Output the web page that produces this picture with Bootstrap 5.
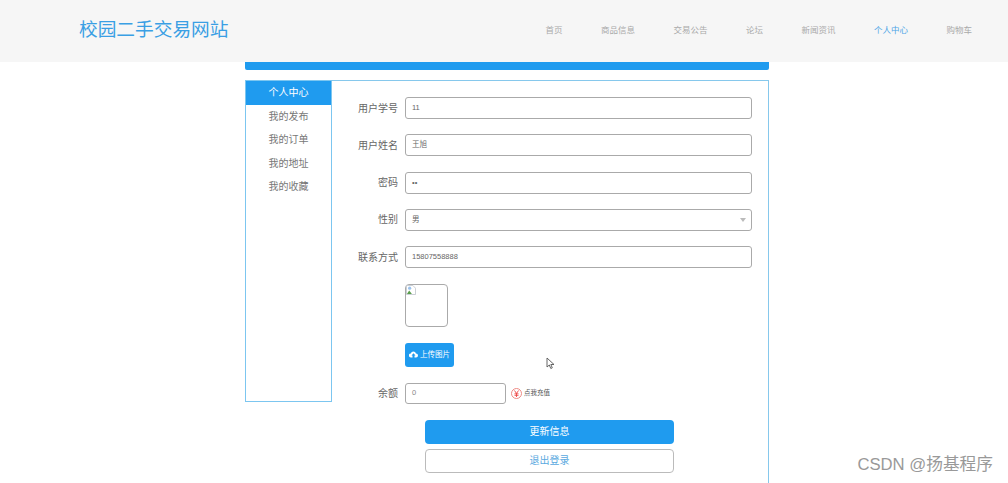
<!DOCTYPE html>
<html lang="zh">
<head>
<meta charset="utf-8">
<title>校园二手交易网站</title>
<link href="https://cdn.jsdelivr.net/npm/bootstrap@5.3.0/dist/css/bootstrap.min.css" rel="stylesheet">
<style>
html,body{height:483px;overflow:hidden;background:#fff}
body{font-family:"Liberation Sans","Noto Sans CJK SC",sans-serif;position:relative;color:#666}
.site-head{height:62px;background:#f6f6f6;padding-left:79px;padding-right:36px}
.site-logo{font-size:18.700px;color:#3a9fe4;line-height:1;margin-top:-1px}
.site-menu{font-size:8.500px;color:#aaa;margin-top:-2px}
.site-menu a{color:#aaa;text-decoration:none;margin-left:38.500px}
.site-menu a.on{color:#4da5e6}
.blue-strip{width:524px;height:7.500px;background:#1f9bef;margin:0 0 0 245px;border-radius:0 0 2px 2px}
.shell{width:524px;margin:10.500px 0 0 245px;height:600px}
.side-col{width:87px;height:322px;border:1px solid #7cc6f0;flex:none;font-size:10px;color:#777}
.side-col div{height:23.500px;line-height:24px;text-align:center}
.side-col div.on{background:#1f9bef;color:#fff}
.main-col{flex:1;border:1px solid #86c8ec;border-left:0;padding:16px 16px 0 0}
.f-row{height:22px;margin-bottom:15.300px}
.f-label{width:66px;text-align:right;font-size:10px;color:#666;margin-right:7px;flex:none}
.f-box{flex:1;height:22px;border:1px solid #aaa;border-radius:3px;font-size:7.500px;color:#666;padding-left:6px;line-height:20px;background:#fff;display:flex;align-items:center;justify-content:space-between}
.f-caret{width:0;height:0;border-left:3.500px solid transparent;border-right:3.500px solid transparent;border-top:4px solid #bbb;margin-right:5px}
.pic-box{width:43px;height:43px;border:1px solid #aaa;border-radius:4px;margin:15.500px 0 16px 73px}
.pic-box svg{display:block}
.up-btn{width:49px;height:24px;background:#1f9bef;color:#fff;border-radius:3px;font-size:7.500px;margin-left:73px;gap:2px}
.money{margin-top:16px;margin-bottom:16px;height:21px}
.money .f-box{flex:none;width:101px;height:21px;color:#888}
.pay-text{font-size:6.500px;color:#555;margin-left:5px;gap:2px}
.act-btn{width:249px;height:24px;margin-left:93px;border-radius:4px;font-size:10px}
.act-main{background:#1f9bef;color:#fff}
.act-out{border:1px solid #bbb;color:#5aa9e0;background:#fff;margin-top:5px}
.mark-text{position:absolute;right:15px;top:455px;font-size:16.700px;color:#999;line-height:1.2}
.mouse{position:absolute;left:546px;top:357px}
</style>
</head>
<body>
<header class="site-head d-flex align-items-center justify-content-between">
  <div class="site-logo">校园二手交易网站</div>
  <nav class="site-menu d-flex align-items-center">
    <a href="#">首页</a><a href="#">商品信息</a><a href="#">交易公告</a><a href="#">论坛</a><a href="#">新闻资讯</a><a href="#" class="on">个人中心</a><a href="#">购物车</a>
  </nav>
</header>
<div class="blue-strip"></div>
<div class="shell d-flex">
  <div class="side-col">
    <div class="on">个人中心</div>
    <div>我的发布</div>
    <div>我的订单</div>
    <div>我的地址</div>
    <div>我的收藏</div>
  </div>
  <div class="main-col">
    <div class="f-row d-flex align-items-center"><div class="f-label">用户学号</div><div class="f-box">11</div></div>
    <div class="f-row d-flex align-items-center"><div class="f-label">用户姓名</div><div class="f-box">王旭</div></div>
    <div class="f-row d-flex align-items-center"><div class="f-label">密码</div><div class="f-box">••</div></div>
    <div class="f-row d-flex align-items-center"><div class="f-label">性别</div><div class="f-box">男<span class="f-caret"></span></div></div>
    <div class="f-row d-flex align-items-center"><div class="f-label">联系方式</div><div class="f-box">15807558888</div></div>
    <div class="pic-box">
      <svg width="10" height="10" viewBox="0 0 11 11"><path d="M.5.500h7l3 3v7H.5z" fill="#fff" stroke="#c5c9d0"/><path d="M1 10l2.500-4 3 4z" fill="#5a9e4c"/><circle cx="4" cy="3.500" r="1.800" fill="#9cc3ee"/></svg>
    </div>
    <div class="up-btn d-flex align-items-center justify-content-center">
      <svg width="9" height="7" viewBox="0 0 18 14"><path d="M4 13a4 4 0 0 1-.5-8A5.500 5.500 0 0 1 14 5a4 4 0 0 1 0 8h-3V9h2L9 4.500 5 9h2v4z" fill="#fff"/></svg>
      <span>上传图片</span>
    </div>
    <div class="money d-flex align-items-center">
      <div class="f-label">余额</div><div class="f-box">0</div>
      <div class="pay-text d-flex align-items-center">
        <svg width="11" height="11" viewBox="0 0 11 11"><circle cx="5.500" cy="5.500" r="5" fill="#fff" stroke="#ee8a84"/><path d="M3.500 2.500l2 3 2-3M5.500 5.500v3.500M3.500 5.800h4M3.500 7.300h4" fill="none" stroke="#e44" stroke-width=".9"/></svg>
        <span>点我充值</span>
      </div>
    </div>
    <div class="act-btn act-main d-flex align-items-center justify-content-center">更新信息</div>
    <div class="act-btn act-out d-flex align-items-center justify-content-center">退出登录</div>
  </div>
</div>
<svg class="mouse" width="9" height="13" viewBox="0 0 9 13"><path d="M1 1v9l2.300-2 1.500 3.500 1.500-.7L4.800 7.500H8z" fill="#fff" stroke="#555" stroke-width=".9"/></svg>
<div class="mark-text">CSDN @扬基程序</div>
</body>
</html>
